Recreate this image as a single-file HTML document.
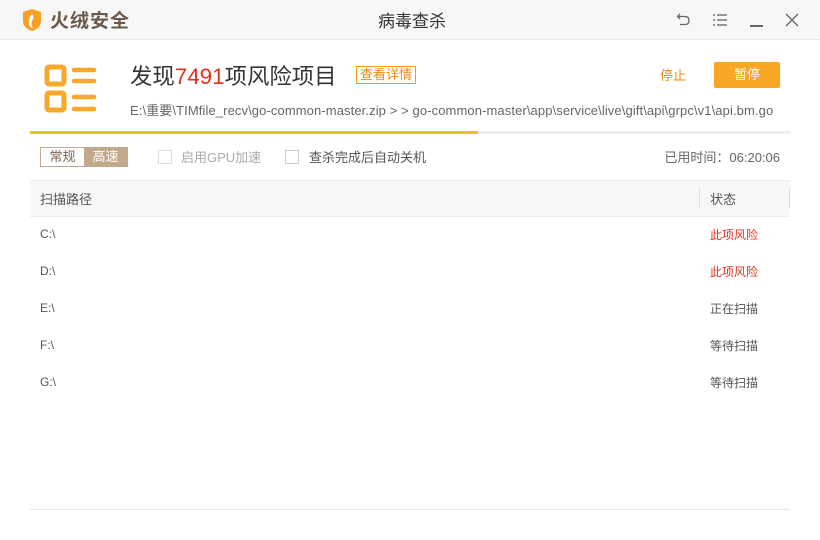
<!DOCTYPE html>
<html><head><meta charset="utf-8"><style>
*{margin:0;padding:0;box-sizing:border-box}
body{width:820px;height:540px;background:#fff;font-family:"Liberation Sans","Noto Sans CJK SC",sans-serif;position:relative;overflow:hidden;color:#555}
.a{position:absolute;white-space:nowrap}
</style></head><body>
<div class="a" style="left:0;top:0;width:820px;height:40px;background:#f6f7f6;border-bottom:1px solid #e8e8e8"></div>
<svg class="a" style="left:22px;top:9px" width="20" height="22" viewBox="0 0 20 22"><path d="M1 3 L10 0 L19 3 L19 12 Q19 19 10 22 Q1 19 1 12 Z" fill="#f6a124"/><path d="M10 5 Q6 10 7 15 Q8 19 11 19 Q8 15 11 10 Q12 7 10 5Z" fill="#fff"/></svg>
<div class="a" style="left:50px;top:6px;font-size:19px;font-weight:bold;color:#6b5a48;letter-spacing:1px">火绒安全</div>
<div class="a" style="left:378px;top:7px;font-size:17px;color:#333">病毒查杀</div>
<svg class="a" style="left:676px;top:12px" width="16" height="16" viewBox="0 0 16 16" fill="none" stroke="#666" stroke-width="1.3"><path d="M4 2 L1.5 4.5 L4 7"/><path d="M1.5 4.5 H9 Q13 4.5 13 8.5 Q13 12.5 9 12.5 H4"/></svg>
<svg class="a" style="left:712px;top:13px" width="16" height="14" viewBox="0 0 16 14" stroke="#666" stroke-width="1.3"><line x1="1" y1="2" x2="3" y2="2"/><line x1="5" y1="2" x2="15" y2="2"/><line x1="1" y1="7" x2="3" y2="7"/><line x1="5" y1="7" x2="15" y2="7"/><line x1="1" y1="12" x2="3" y2="12"/><line x1="5" y1="12" x2="15" y2="12"/></svg>
<div class="a" style="left:750px;top:25px;width:13px;height:1.5px;background:#666"></div>
<svg class="a" style="left:785px;top:13px" width="14" height="14" viewBox="0 0 14 14" stroke="#666" stroke-width="1.3"><line x1="1" y1="1" x2="13" y2="13"/><line x1="13" y1="1" x2="1" y2="13"/></svg>
<svg class="a" style="left:44px;top:64px" width="54" height="52" viewBox="0 0 54 52"><rect x="3" y="3" width="17" height="17" rx="2" fill="none" stroke="#f6a82a" stroke-width="5"/><rect x="3" y="29" width="17" height="17" rx="2" fill="none" stroke="#f6a82a" stroke-width="5"/><g stroke="#f6a82a" stroke-width="4.5" stroke-linecap="round"><line x1="30" y1="6" x2="50" y2="6"/><line x1="30" y1="17" x2="50" y2="17"/><line x1="30" y1="33" x2="50" y2="33"/><line x1="30" y1="45" x2="50" y2="45"/></g></svg>
<div class="a" style="left:130px;top:59px;font-size:22.4px;color:#333">发现<span style="color:#e5301f">7491</span>项风险项目</div>
<div class="a" style="left:356px;top:66px;width:60px;height:18px;border:1px solid #f29b1a;color:#f08a0c;font-size:13px;line-height:16px;text-align:center">查看详情</div>
<div class="a" style="left:660px;top:65px;font-size:13px;color:#f08a0c">停止</div>
<div class="a" style="left:714px;top:62px;width:66px;height:26px;background:#f8a623;border-radius:2px;color:#fff;font-size:13px;line-height:26px;text-align:center">暂停</div>
<div class="a" style="left:130px;top:100px;width:650px;overflow:hidden;font-size:13px;color:#666;letter-spacing:0.1px">E:\重要\TIMfile_recv\go-common-master.zip &gt; &gt; go-common-master\app\service\live\gift\api\grpc\v1\api.bm.go</div>
<div class="a" style="left:30px;top:131px;width:760px;height:3px;background:#eee"></div>
<div class="a" style="left:30px;top:131px;width:448px;height:3px;background:#fbbb1d"></div>
<div class="a" style="left:40px;top:147px;width:88px;height:20px;border:1px solid #c2a98c;font-size:13px;line-height:18px;display:flex"><span style="width:43px;text-align:center;color:#7a6350">常规</span><span style="flex:1;text-align:center;background:#c2a98c;color:#fff">高速</span></div>
<div class="a" style="left:158px;top:150px;width:14px;height:14px;border:1px solid #ddd"></div>
<div class="a" style="left:181px;top:147px;font-size:13px;color:#aaa">启用GPU加速</div>
<div class="a" style="left:285px;top:150px;width:14px;height:14px;border:1px solid #ccc"></div>
<div class="a" style="left:309px;top:147px;font-size:13px;color:#555">查杀完成后自动关机</div>
<div class="a" style="right:40px;top:147px;font-size:13px;color:#666">已用时间：06:20:06</div>
<div class="a" style="left:30px;top:180px;width:760px;height:37px;background:#f6f7f7;border-top:1px solid #eee;border-bottom:1px solid #eee"></div>
<div class="a" style="left:699px;top:188px;width:1px;height:20px;background:#ddd"></div>
<div class="a" style="left:789px;top:188px;width:1px;height:20px;background:#ddd"></div>
<div class="a" style="left:40px;top:189px;font-size:13px;color:#555">扫描路径</div>
<div class="a" style="left:710px;top:189px;font-size:13px;color:#555">状态</div>
<div class="a" style="left:40px;top:227px;font-size:12px;color:#555">C:\</div><div class="a" style="left:710px;top:226px;font-size:12px;color:#e5301f">此项风险</div>
<div class="a" style="left:40px;top:264px;font-size:12px;color:#555">D:\</div><div class="a" style="left:710px;top:263px;font-size:12px;color:#e5301f">此项风险</div>
<div class="a" style="left:40px;top:301px;font-size:12px;color:#555">E:\</div><div class="a" style="left:710px;top:300px;font-size:12px;color:#555">正在扫描</div>
<div class="a" style="left:40px;top:338px;font-size:12px;color:#555">F:\</div><div class="a" style="left:710px;top:337px;font-size:12px;color:#555">等待扫描</div>
<div class="a" style="left:40px;top:375px;font-size:12px;color:#555">G:\</div><div class="a" style="left:710px;top:374px;font-size:12px;color:#555">等待扫描</div>
<div class="a" style="left:30px;top:509px;width:760px;height:1px;background:#e8e8e8"></div>
</body></html>
